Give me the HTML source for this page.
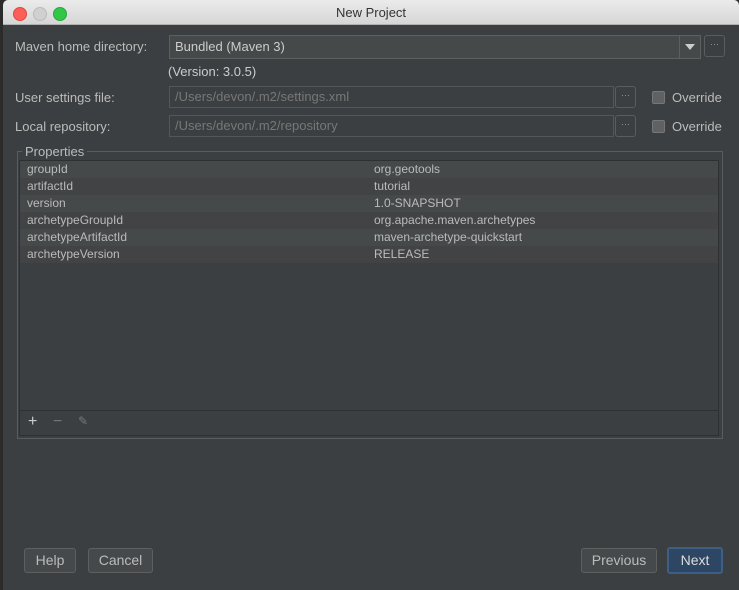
<!DOCTYPE html>
<html><head><style>
body{margin:0;width:739px;height:590px;background:#2b2b2b;font-family:"Liberation Sans",sans-serif;font-size:13px;color:#bbbbbb;position:relative;overflow:hidden}
.win{position:absolute;left:3px;top:0;width:736px;height:590px;background:#3c3f41;border-radius:5px 5px 0 0;overflow:hidden}
.title{position:absolute;left:0;top:0;right:0;height:24px;background:linear-gradient(#ebebeb,#d6d6d6);border-bottom:1px solid #b0b0b0;color:#333;text-align:center;line-height:26px;font-size:13px}
.dot{position:absolute;top:7px;width:12px;height:12px;border-radius:50%}
.a{position:absolute}
.lbl{position:absolute;font-size:13px;color:#bbbbbb}
.field{position:absolute;border:1px solid #5e6060;background:#45494a;height:22px;box-sizing:border-box;line-height:20px;padding-left:5px;color:#bbbbbb}
.dis{background:#3c3f41;color:#777;border-color:#545658}
.btn3{position:absolute;width:21px;height:22px;border:1px solid #5a5c5e;border-radius:3px;box-sizing:border-box;color:#999;font-size:9px;text-align:center;line-height:16px}
.cb{position:absolute;width:13px;height:13px;background:#5f6163;border:1px solid #777;border-radius:2px;box-sizing:border-box}
.row{position:absolute;left:17px;width:698px;height:17px;line-height:17px;font-size:12px;color:#bbbbbb}
.row span{position:absolute;left:7px}.row b{font-weight:normal;position:absolute;left:354px}
.btn{position:absolute;top:548px;height:25px;border:1px solid #5e6060;border-radius:3px;background:#46494b;box-sizing:border-box;text-align:center;line-height:23px;color:#bbbbbb;font-size:14px}
</style></head><body>
<div class="win">
<div class="title">New Project
<div class="dot" style="left:10px;background:#fc5f57;border:0.5px solid #de4740"></div>
<div class="dot" style="left:30px;background:#d0d0d0;border:0.5px solid #bbb"></div>
<div class="dot" style="left:50px;background:#33c748;border:0.5px solid #27a83a"></div>
</div>
<div class="lbl" style="left:12px;top:39px">Maven home directory:</div>
<div class="field" style="left:166px;top:35px;width:532px;height:24px;line-height:22px;color:#cccccc">Bundled (Maven 3)</div>
<div class="a" style="left:676px;top:36px;width:1px;height:22px;background:#5e6060"></div>
<div class="a" style="left:682px;top:44px;width:0;height:0;border-left:5px solid transparent;border-right:5px solid transparent;border-top:6px solid #ccc"></div>
<div class="btn3" style="left:701px;top:35px">···</div>
<div class="lbl" style="left:165px;top:64px;color:#cccccc">(Version: 3.0.5)</div>
<div class="lbl" style="left:12px;top:90px">User settings file:</div>
<div class="field dis" style="left:166px;top:86px;width:445px">/Users/devon/.m2/settings.xml</div>
<div class="btn3" style="left:612px;top:86px">···</div>
<div class="cb" style="left:649px;top:91px"></div><div class="lbl" style="left:669px;top:90px">Override</div>
<div class="lbl" style="left:12px;top:119px">Local repository:</div>
<div class="field dis" style="left:166px;top:115px;width:445px">/Users/devon/.m2/repository</div>
<div class="btn3" style="left:612px;top:115px">···</div>
<div class="cb" style="left:649px;top:120px"></div><div class="lbl" style="left:669px;top:119px">Override</div>
<div class="a" style="left:14px;top:151px;width:706px;height:288px;border:1px solid #5a5c5e;box-sizing:border-box"></div>
<div class="lbl" style="left:19px;top:144px;background:#3c3f41;padding:0 3px">Properties</div>
<div class="a" style="left:16px;top:160px;width:700px;height:251px;border:1px solid #2e3032;box-sizing:border-box"></div>
<div class="row" style="top:161px;background:#45494a"><span>groupId</span><b>org.geotools</b></div>
<div class="row" style="top:178px;background:#414345"><span>artifactId</span><b>tutorial</b></div>
<div class="row" style="top:195px;background:#45494a"><span>version</span><b>1.0-SNAPSHOT</b></div>
<div class="row" style="top:212px;background:#414345"><span>archetypeGroupId</span><b>org.apache.maven.archetypes</b></div>
<div class="row" style="top:229px;background:#45494a"><span>archetypeArtifactId</span><b>maven-archetype-quickstart</b></div>
<div class="row" style="top:246px;background:#414345"><span>archetypeVersion</span><b>RELEASE</b></div>
<div class="a" style="left:16px;top:410px;width:700px;height:26px;border:1px solid #2e3032;border-top:none;box-sizing:border-box"></div>
<div class="lbl" style="left:25px;top:413px;font-size:16px;color:#ccc">+</div>
<div class="lbl" style="left:50px;top:413px;font-size:16px;color:#777">−</div>
<div class="lbl" style="left:75px;top:414px;font-size:12px;color:#777">✎</div>
<div class="btn" style="left:21px;top:548px;width:52px">Help</div>
<div class="btn" style="left:85px;top:548px;width:65px">Cancel</div>
<div class="btn" style="left:578px;top:548px;width:76px">Previous</div>
<div class="btn" style="left:664px;top:547px;width:56px;height:27px;background:#2d4663;border:2px solid #3e5f85;line-height:23px;color:#ddd">Next</div>
</div>
</body></html>
